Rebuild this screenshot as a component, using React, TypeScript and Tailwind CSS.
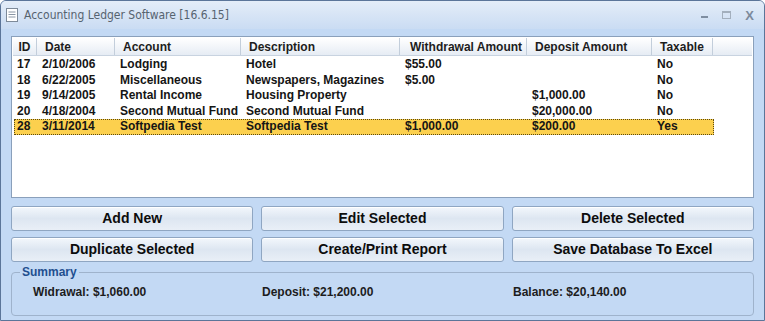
import React from 'react'

const cols = [
  { label: 'ID', w: 'w-[24px]' },
  { label: 'Date', w: 'w-[78px]' },
  { label: 'Account', w: 'w-[126px]' },
  { label: 'Description', w: 'w-[159px]' },
  { label: 'Withdrawal Amount', w: 'w-[127px]' },
  { label: 'Deposit Amount', w: 'w-[125px]' },
  { label: 'Taxable', w: 'w-[61px]' },
]

const rows = [
  ['17', '2/10/2006', 'Lodging', 'Hotel', '$55.00', '', 'No'],
  ['18', '6/22/2005', 'Miscellaneous', 'Newspapers, Magazines', '$5.00', '', 'No'],
  ['19', '9/14/2005', 'Rental Income', 'Housing Property', '', '$1,000.00', 'No'],
  ['20', '4/18/2004', 'Second Mutual Fund', 'Second Mutual Fund', '', '$20,000.00', 'No'],
  ['28', '3/11/2014', 'Softpedia Test', 'Softpedia Test', '$1,000.00', '$200.00', 'Yes'],
]

function Btn({ children }: { children: React.ReactNode }) {
  return (
    <button className="h-[25px] flex-1 rounded-[3px] border border-[#8fa6c2] bg-gradient-to-b from-[#f3f7fc] via-[#dde6f1] to-[#e9eff7] text-[14px] font-bold text-[#0c0c0c] shadow-[inset_0_1px_0_#ffffff]">
      {children}
    </button>
  )
}

export default function App() {
  return (
    <div
      className="w-[765px] h-[321px] overflow-hidden rounded-t-[6px] border border-[#5b7599] bg-[#c3d9f4] flex flex-col"
      style={{ fontFamily: '"Liberation Sans", Arial, sans-serif' }}
    >
      {/* Title bar */}
      <div className="h-[28px] flex items-center px-[5px] bg-gradient-to-b from-[#e4edf8] to-[#cadcf3] shrink-0">
        <svg width="12" height="14" viewBox="0 0 12 14" className="mr-[6px]">
          <rect x="0.5" y="0.5" width="11" height="13" fill="#fff" stroke="#7d8a99" />
          <line x1="2.5" y1="4" x2="9.5" y2="4" stroke="#8a96a4" />
          <line x1="2.5" y1="6.5" x2="9.5" y2="6.5" stroke="#8a96a4" />
          <line x1="2.5" y1="9" x2="9.5" y2="9" stroke="#8a96a4" />
        </svg>
        <span className="text-[12px] text-[#56636f]" style={{ fontFamily: '"DejaVu Sans Condensed", "DejaVu Sans", sans-serif' }}>
          Accounting Ledger Software [16.6.15]
        </span>
        <div className="ml-auto flex items-center gap-[14px] pr-[5px] text-[#8796a8]">
          <span className="w-[7px] h-[2px] bg-[#7f8ea1] mt-[4px]" />
          <span className="w-[9px] h-[8px] border border-[#a3afbd] border-t-[2px]" />
          <span className="text-[13px] font-bold leading-none text-[#7c8a9c]">X</span>
        </div>
      </div>

      <div className="flex-1 flex flex-col px-[10px] pt-[7px]">
        {/* Table */}
        <div className="h-[162px] border border-[#8aa0bb] bg-white p-[1px] shrink-0">
          <div className="flex h-[18px] bg-gradient-to-b from-[#ffffff] to-[#e6ecf4] border-b border-[#c8d3e0]">
            {cols.map((c) => (
              <div
                key={c.label}
                className={`${c.w} shrink-0 border-r border-[#c3cedb] text-[12px] font-bold text-[#1d1d1d] leading-[18px] whitespace-nowrap ${c.label === 'ID' ? 'text-center' : c.label === 'Withdrawal Amount' ? 'pl-[10px]' : 'pl-[8px]'}`}
              >
                {c.label}
              </div>
            ))}
            <div className="flex-1" />
          </div>
          <div className="pt-[1px]">
            {rows.map((r, i) => {
              const sel = i === rows.length - 1
              return (
                <div
                  key={r[0]}
                  className={`flex h-[15.5px] w-[700px] ml-[1px] text-[12px] font-bold leading-[15px] ${sel ? 'bg-[#fcd04e] outline outline-1 outline-dotted outline-[#5c4a10] -outline-offset-1' : ''}`}
                >
                  {r.map((cell, j) => (
                    <div key={j} className={`${cols[j].w} shrink-0 text-[#151515] whitespace-nowrap overflow-hidden ${j === 0 ? 'px-[3px]' : 'px-[4px]'}`}>
                      {cell}
                    </div>
                  ))}
                </div>
              )
            })}
          </div>
        </div>

        {/* Buttons */}
        <div className="flex gap-[8px] mt-[8px]">
          <Btn>Add New</Btn>
          <Btn>Edit Selected</Btn>
          <Btn>Delete Selected</Btn>
        </div>
        <div className="flex gap-[8px] mt-[6px]">
          <Btn>Duplicate Selected</Btn>
          <Btn>Create/Print Report</Btn>
          <Btn>Save Database To Excel</Btn>
        </div>

        {/* Summary */}
        <div className="relative mt-[10px] h-[44px] rounded-[4px] border border-[#9fb3cc] flex items-start pt-[10px] text-[12px] font-bold text-[#1d1d1d]">
          <span className="absolute -top-[8px] left-[8px] bg-[#c3d9f4] px-[2px] text-[12px] font-bold text-[#1f4f8f] leading-[14px]">
            Summary
          </span>
          <div className="w-[250px] pl-[21px]">Widrawal: $1,060.00</div>
          <div className="w-[251px]">Deposit: $21,200.00</div>
          <div>Balance: $20,140.00</div>
        </div>
      </div>
    </div>
  )
}
